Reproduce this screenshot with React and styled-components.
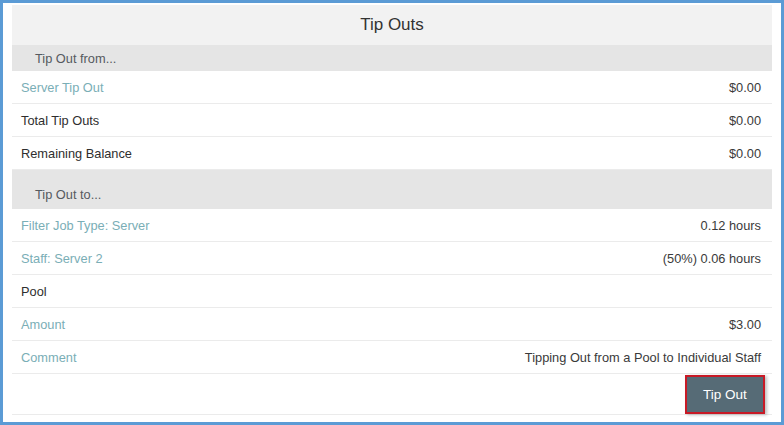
import React from 'react';
import styled, { createGlobalStyle } from 'styled-components';

const GlobalStyle = createGlobalStyle`
  body {
    margin: 0;
    background: #ffffff;
    font-family: "Liberation Sans", Arial, sans-serif;
  }
`;

const fromRows = [
  { label: 'Server Tip Out', value: '$0.00', link: true },
  { label: 'Total Tip Outs', value: '$0.00' },
  { label: 'Remaining Balance', value: '$0.00' }
];

const toRows = [
  { label: 'Filter Job Type: Server', value: '0.12 hours', link: true },
  { label: 'Staff: Server 2', value: '(50%) 0.06 hours', link: true },
  { label: 'Pool', value: '' },
  { label: 'Amount', value: '$3.00', link: true },
  { label: 'Comment', value: 'Tipping Out from a Pool to Individual Staff', link: true }
];

const Frame = styled.div`
  box-sizing: border-box;
  width: 784px;
  height: 425px;
  border: 3px solid #5b9bd5;
  padding: 2px 9px 0 9px;
  background: #ffffff;
`;

const Panel = styled.div`
  display: flex;
  flex-direction: column;
`;

const Header = styled.div`
  height: 40px;
  background: #f2f2f2;
  display: flex;
  align-items: center;
  justify-content: center;
  font-size: 17px;
  color: #333333;
`;

const Section = styled.div`
  height: ${p => (p.tall ? '39px' : '26px')};
  background: #e5e5e5;
  display: flex;
  align-items: ${p => (p.tall ? 'flex-end' : 'center')};
  padding: 0 0 ${p => (p.tall ? '7px' : '0')} 23px;
  box-sizing: border-box;
  font-size: 12.8px;
  color: #555a60;
`;

const Row = styled.div`
  height: 33px;
  box-sizing: border-box;
  border-bottom: 1px solid #ebebeb;
  display: flex;
  align-items: center;
  justify-content: space-between;
  padding: 0 11px 0 9px;
  font-size: 12.8px;
`;

const Label = styled.span`
  color: ${p => (p.link ? '#7aaeb6' : '#2e2e2e')};
`;

const Value = styled.span`
  color: #3a3a3a;
`;

const ActionRow = styled.div`
  height: 41px;
  box-sizing: border-box;
  border-bottom: 1px solid #ebebeb;
  display: flex;
  align-items: flex-start;
  justify-content: flex-end;
  padding: 1px 7px 0 0;
`;

const TipButton = styled.button`
  width: 80px;
  height: 39px;
  box-sizing: border-box;
  border: 2px solid #c81a26;
  background: #566b76;
  color: #ffffff;
  font-family: "Liberation Sans", Arial, sans-serif;
  font-size: 13.5px;
  padding: 0;
  box-shadow: 2px 1px 3px rgba(0, 0, 0, 0.25);
  cursor: pointer;
`;

export default function App() {
  return (
    <>
      <GlobalStyle />
      <Frame>
        <Panel>
          <Header>Tip Outs</Header>
          <Section>Tip Out from...</Section>
          {fromRows.map(r => (
            <Row key={r.label}>
              <Label link={r.link}>{r.label}</Label>
              <Value>{r.value}</Value>
            </Row>
          ))}
          <Section tall>Tip Out to...</Section>
          {toRows.map(r => (
            <Row key={r.label}>
              <Label link={r.link}>{r.label}</Label>
              <Value>{r.value}</Value>
            </Row>
          ))}
          <ActionRow>
            <TipButton>Tip Out</TipButton>
          </ActionRow>
        </Panel>
      </Frame>
    </>
  );
}
